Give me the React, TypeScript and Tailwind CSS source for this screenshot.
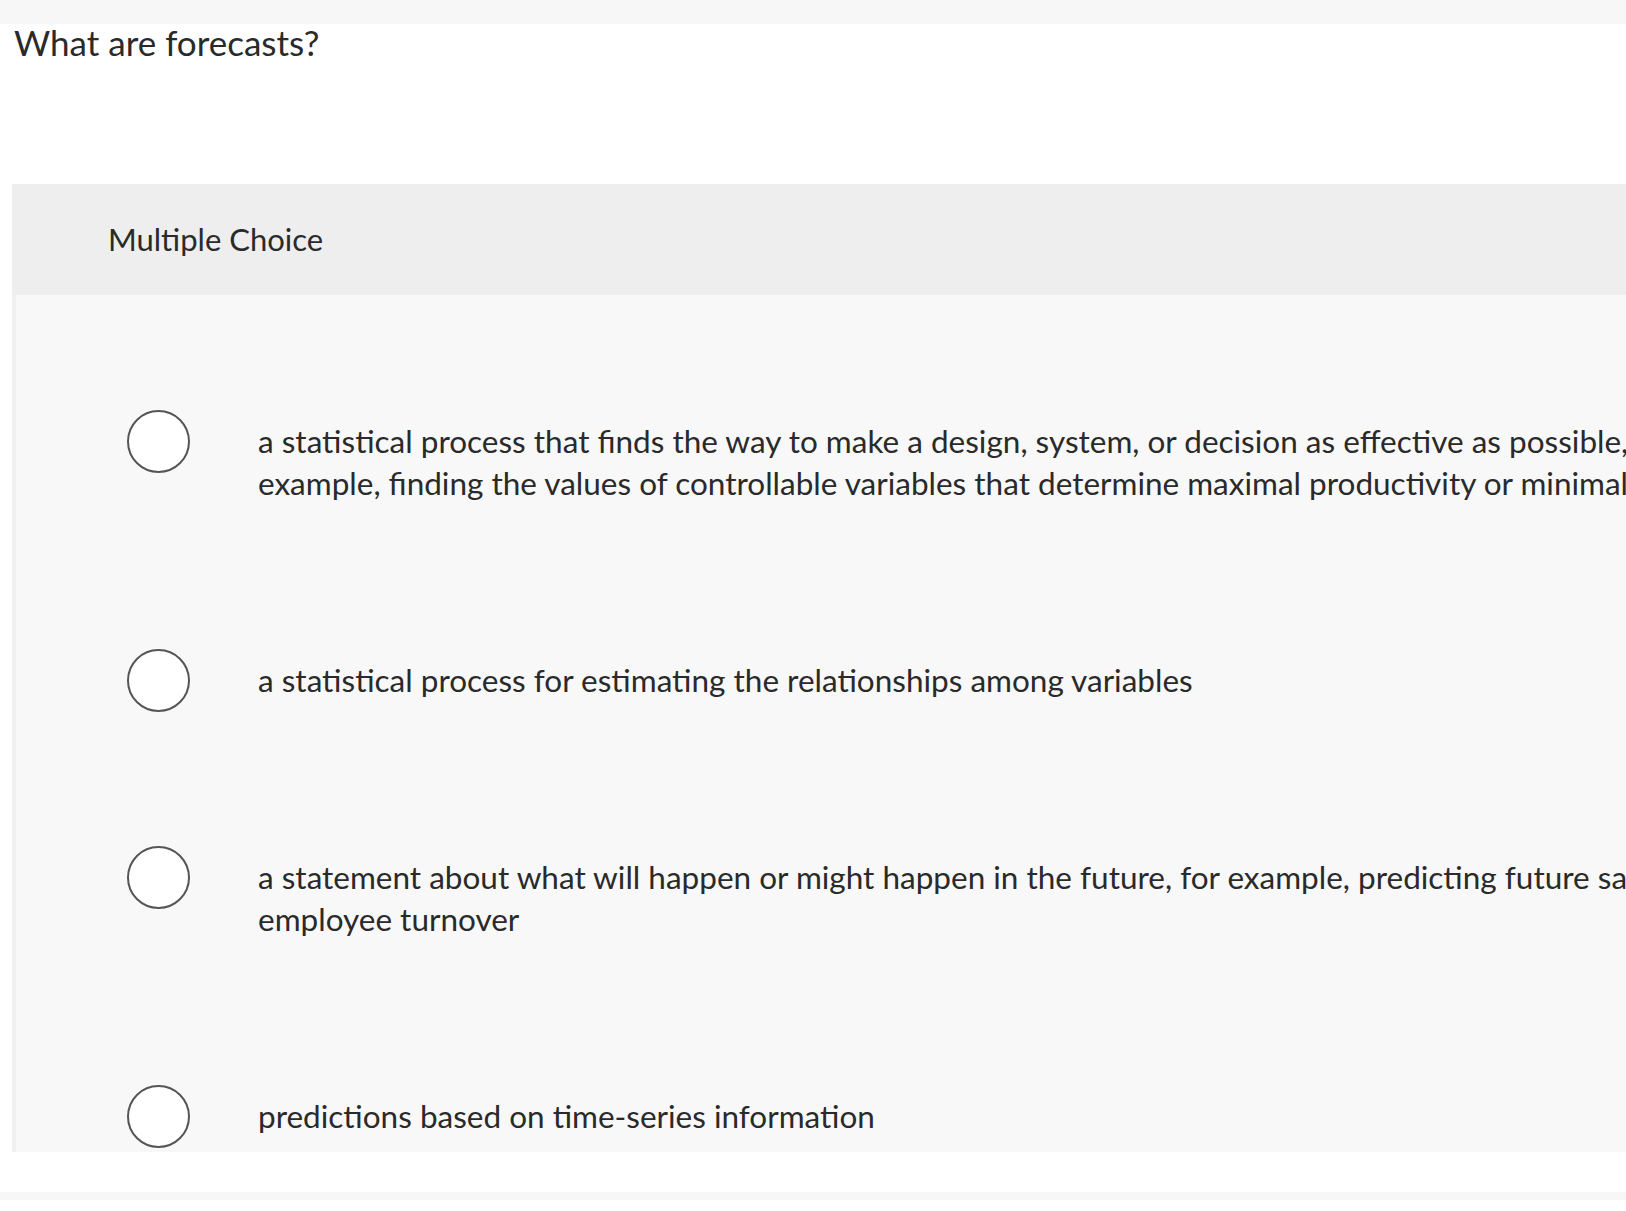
const options = [
  "a statistical process that finds the way to make a design, system, or decision as effective as possible, for example, finding the values of controllable variables that determine maximal productivity or minimal waste",
  "a statistical process for estimating the relationships among variables",
  "a statement about what will happen or might happen in the future, for example, predicting future sales or employee turnover",
  "predictions based on time-series information",
];

function Radio() {
  return (
    <div className="flex h-[42px] w-[63px] shrink-0 items-center justify-center">
      <span className="block h-[63px] w-[63px] shrink-0 rounded-full border-2 border-[#555] bg-white" />
    </div>
  );
}

export default function App() {
  return (
    <div
      className="relative h-[1211px] w-[1626px] overflow-hidden bg-white text-[#2a2a2a]"
      style={{ fontFamily: "Lato, 'Liberation Sans', sans-serif" }}
    >
      <div className="h-[24px] bg-[#f7f7f7]" />
      <h1 className="-mt-[2px] pl-[14px] text-[35px] leading-[40px]">What are forecasts?</h1>
      <div className="ml-[12px] mt-[122px] w-[1800px]">
        <div className="flex h-[111px] items-center bg-[#eeeeee] pl-[96px] text-[31px]">
          Multiple Choice
        </div>
        <div className="flex h-[857px] flex-col gap-[155px] border-l-4 border-[#f0f0f0] bg-[#f8f8f8] pl-[111px] pt-[125px]">
          {options.map((o) => (
            <label key={o} className="flex items-start gap-[68px]">
              <Radio />
              <span className="w-[1500px] text-[31.5px] leading-[42px]">{o}</span>
            </label>
          ))}
        </div>
      </div>
      <div className="mt-[40px] h-[8px] bg-[#f7f7f7]" />
    </div>
  );
}
